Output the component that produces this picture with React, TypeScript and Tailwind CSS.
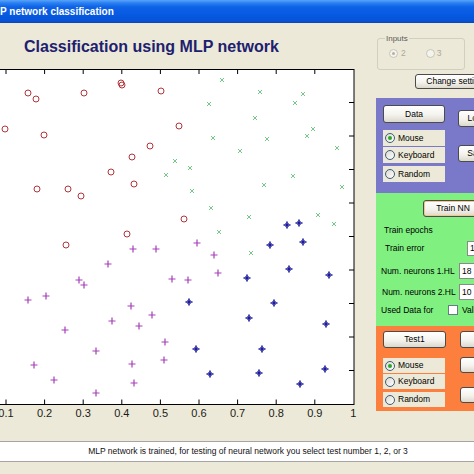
import React from "react";

// page coordinates read off the figure (x, y)
const circles = [
  [28, 93], [36, 99], [84, 93], [121, 83], [122, 85], [161, 91], [5, 129], [44, 135],
  [179, 126], [150, 146], [132, 157], [111, 172], [134, 184], [37, 189], [68, 189],
  [81, 196], [127, 234], [184, 219], [66, 245],
];
const crosses = [
  [175, 161], [166, 175], [222, 80], [260, 92], [303, 94], [295, 103], [209, 104],
  [255, 118], [313, 129], [307, 136], [213, 138], [267, 139], [337, 148], [240, 151],
  [190, 168], [293, 176], [264, 185], [342, 187], [192, 191], [211, 208], [249, 217],
  [318, 215], [334, 224], [219, 232], [251, 253],
];
const pluses = [
  [133, 249], [156, 249], [108, 264], [172, 279], [79, 280], [84, 285], [28, 300],
  [46, 296], [131, 306], [152, 315], [112, 321], [139, 326], [65, 330], [165, 342],
  [96, 351], [164, 360], [34, 365], [132, 364], [54, 380], [134, 383], [96, 393],
  [197, 243], [214, 255], [218, 273], [188, 280],
];
const stars = [
  [287, 225], [299, 223], [270, 245], [303, 242], [289, 269], [329, 275], [247, 278],
  [189, 302], [274, 303], [249, 318], [326, 324], [196, 349], [262, 349], [210, 374],
  [259, 373], [325, 369], [300, 384],
];

const ticks = [0.1, 0.2, 0.3, 0.4, 0.5, 0.6, 0.7, 0.8, 0.9];
const xPx = (v: number) => 6 + (v - 0.1) * 386;
const yPx = (v: number) => 335 - v * 335;

function Plot() {
  return (
    <svg width="360" height="352" className="block mt-[14px]">
      <rect x="-10" y="0.5" width="364" height="335" fill="#ffffff" stroke="#000" strokeWidth="1" />
      {ticks.map((t) => (
        <g key={t} stroke="#000" strokeWidth="1">
          <line x1={xPx(t)} y1="0.5" x2={xPx(t)} y2="5" />
          <line x1={xPx(t)} y1="335" x2={xPx(t)} y2="330.5" />
          <line x1="354" y1={yPx(t)} x2="349" y2={yPx(t)} />
        </g>
      ))}
      {[...ticks, 1].map((t) => (
        <text
          key={t}
          x={xPx(t)}
          y="348"
          textAnchor="middle"
          fontSize="11"
          fill="#1a1a1a"
          fontFamily="'Liberation Sans', Arial, sans-serif"
        >
          {t === 1 ? "1" : String(t)}
        </text>
      ))}
      <g transform="translate(0,-69)">
        {circles.map(([x, y], i) => (
          <circle key={"c" + i} cx={x} cy={y} r="3" fill="none" stroke="#b3343a" strokeWidth="1" />
        ))}
        {crosses.map(([x, y], i) => (
          <path
            key={"x" + i}
            d={`M${x - 2} ${y - 2}L${x + 2} ${y + 2}M${x - 2} ${y + 2}L${x + 2} ${y - 2}`}
            stroke="#74c986"
            strokeWidth="1"
          />
        ))}
        {pluses.map(([x, y], i) => (
          <path
            key={"p" + i}
            d={`M${x - 3.5} ${y}H${x + 3.5}M${x} ${y - 3.5}V${y + 3.5}`}
            stroke="#a63fb8"
            strokeWidth="1.2"
          />
        ))}
        {stars.map(([x, y], i) => (
          <g key={"s" + i} stroke="#1c1c9c">
            <path d={`M${x - 3.5} ${y}H${x + 3.5}M${x} ${y - 3.5}V${y + 3.5}`} strokeWidth="1.6" />
            <path
              d={`M${x - 1.6} ${y - 1.6}L${x + 1.6} ${y + 1.6}M${x - 1.6} ${y + 1.6}L${x + 1.6} ${y - 1.6}`}
              strokeWidth="1"
            />
          </g>
        ))}
      </g>
    </svg>
  );
}

function Btn({ children, className }: { children?: React.ReactNode; className: string }) {
  return (
    <button
      className={
        "shrink-0 rounded-[3px] border border-[#4b4b4b] bg-[linear-gradient(180deg,#ffffff,#f4f3ee_55%,#dcd8cc)] text-[8.5px] leading-none text-black flex items-center justify-center whitespace-nowrap " +
        className
      }
    >
      {children}
    </button>
  );
}

function Radio({ checked, label, className }: { checked?: boolean; label: string; className: string }) {
  return (
    <div className={"w-[62px] bg-[#ece9d8] flex items-center gap-[3px] pl-[2px] text-[8.5px] " + className}>
      <span className="w-[10px] h-[10px] rounded-full border border-[#3e5a7a] bg-[linear-gradient(135deg,#dcdad2,#ffffff)] flex items-center justify-center">
        {checked && <span className="w-[4px] h-[4px] rounded-full bg-[#2aa52a]" />}
      </span>
      <span>{label}</span>
    </div>
  );
}

export default function App() {
  return (
    <div className="w-[474px] h-[474px] overflow-hidden bg-[#ece9d8] font-['Liberation_Sans',Arial,sans-serif] text-black flex flex-col">
      <div className="h-[23px] shrink-0 bg-[linear-gradient(180deg,#5aa4f8_0px,#2a80f2_3px,#0d62e6_7px,#0658e0_16px,#0652d6_21px,#0a46b5_23px)] flex items-center">
        <span className="text-white font-bold text-[10px] whitespace-nowrap">P network classification</span>
      </div>

      <div className="h-[418px] shrink-0 flex">
        <div className="w-[360px] shrink-0 flex flex-col">
          <h1 className="mt-[16px] ml-[24px] text-[16px] leading-[16px] font-bold text-[#20206e] whitespace-nowrap">
            Classification using MLP network
          </h1>
          <Plot />
        </div>

        <div className="ml-[16px] w-[140px] shrink-0 flex flex-col text-[8.5px]">
          <fieldset className="mt-[11px] ml-[1px] w-[88px] h-[36px] border border-[#d0d0bf] rounded-[3px]">
            <legend className="ml-[7px] px-[1px] text-[8px] leading-[9px] text-[#5a5a5a]">Inputs</legend>
            <div className="mt-[5px] h-[10px] flex items-center text-[#aca899]">
              <span className="ml-[11px] w-[9px] h-[9px] rounded-full border border-[#c9c6b6] bg-[#f4f3ee] flex items-center justify-center">
                <span className="w-[3px] h-[3px] rounded-full bg-[#b5b2a3]" />
              </span>
              <span className="ml-[3px]">2</span>
              <span className="ml-[20px] w-[9px] h-[9px] rounded-full border border-[#c9c6b6] bg-[#f4f3ee]" />
              <span className="ml-[2px]">3</span>
            </div>
          </fieldset>

          <Btn className="mt-[4px] ml-[39px] h-[15px] w-[84px]">Change settings</Btn>

          <div className="mt-[9px] h-[95px] bg-[#7a78c8] flex pl-[7px]">
            <div className="w-[63px] flex flex-col">
              <Btn className="mt-[7px] h-[18px] w-[62px]">Data</Btn>
              <Radio checked label="Mouse" className="mt-[7px] h-[16px]" />
              <Radio label="Keyboard" className="mt-[1px] h-[16px]" />
              <Radio label="Random" className="mt-[3px] h-[16px]" />
            </div>
            <div className="ml-[12px] flex flex-col">
              <Btn className="mt-[12px] h-[17px] w-[38px]">Load</Btn>
              <Btn className="mt-[18px] h-[17px] w-[38px]">Save</Btn>
            </div>
          </div>

          <div className="h-[133px] bg-[#80f080] flex flex-col">
            <Btn className="mt-[7px] ml-[47px] h-[17px] w-[60px] shadow-[inset_0_0_0_1px_#f2c58a]">Train NN</Btn>
            <div className="mt-[5px] h-[16px] pl-[8px] flex items-center">Train epochs</div>
            <div className="mt-[3px] h-[15px] pl-[9px] flex items-center">
              <span className="w-[82px]">Train error</span>
              <span className="h-[15px] w-[40px] bg-white border border-[#8a8a8a] pl-[2px] flex items-center">1e-5</span>
            </div>
            <div className="mt-[7px] h-[16px] pl-[5px] flex items-center">
              <span className="w-[78px] whitespace-nowrap">Num. neurons 1.HL</span>
              <span className="h-[16px] w-[40px] bg-white border border-[#8a8a8a] pl-[2px] flex items-center">18</span>
            </div>
            <div className="mt-[5px] h-[16px] pl-[6px] flex items-center">
              <span className="w-[77px] whitespace-nowrap">Num. neurons 2.HL</span>
              <span className="h-[16px] w-[40px] bg-white border border-[#8a8a8a] pl-[2px] flex items-center">10</span>
            </div>
            <div className="mt-[4px] h-[12px] pl-[5px] flex items-center">
              <span className="w-[67px] whitespace-nowrap">Used Data for</span>
              <span className="w-[10px] h-[10px] bg-white border border-[#6a7a8a]" />
              <span className="ml-[4px]">Validation</span>
            </div>
          </div>

          <div className="h-[85px] bg-[#fc7f3e] flex pl-[7px]">
            <div className="w-[63px] flex flex-col">
              <Btn className="mt-[5px] h-[17px] w-[63px]">Test1</Btn>
              <Radio checked label="Mouse" className="mt-[10px] h-[15px]" />
              <Radio label="Keyboard" className="mt-[1px] h-[15px]" />
              <Radio label="Random" className="mt-[3px] h-[15px]" />
            </div>
            <div className="ml-[14px] flex flex-col">
              <Btn className="mt-[5px] h-[17px] w-[60px]">Test2</Btn>
              <Btn className="mt-[9px] h-[16px] w-[60px]">Test3</Btn>
              <Btn className="mt-[14px] h-[16px] w-[60px]">Result</Btn>
            </div>
          </div>
        </div>
      </div>

      <div className="h-[21px] shrink-0 bg-white border-y border-[#a5a5a5] flex items-center justify-center pl-[22px] text-[8.5px] text-[#111] whitespace-nowrap">
        MLP network is trained, for testing of neural network you select test number 1, 2, or 3
      </div>
    </div>
  );
}
